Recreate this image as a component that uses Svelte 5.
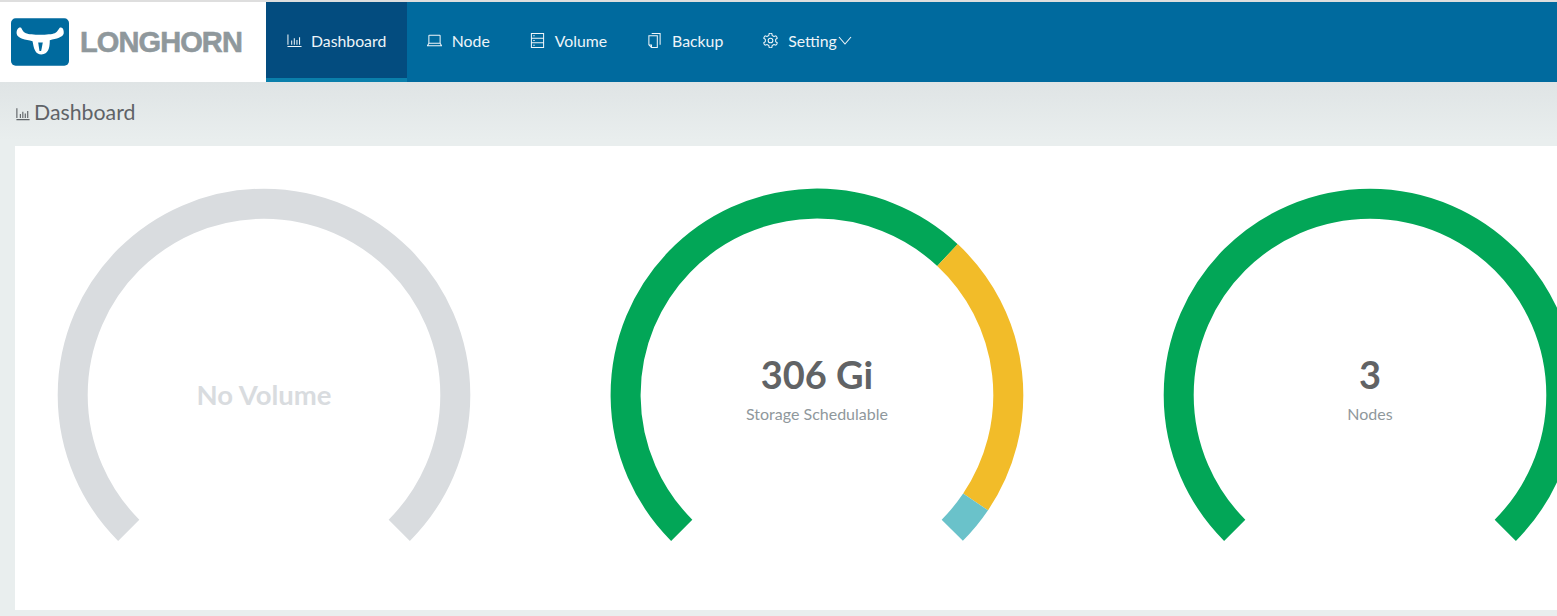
<script>
  const R = 191.3;
  const pt = (deg) => {
    const a = (deg * Math.PI) / 180;
    return [208 + R * Math.sin(a), 208 - R * Math.cos(a)];
  };
  const arc = (from, to) => {
    const [x1, y1] = pt(from);
    const [x2, y2] = pt(to);
    return `M${x1.toFixed(2)} ${y1.toFixed(2)}A${R} ${R} 0 ${to - from > 180 ? 1 : 0} 1 ${x2.toFixed(2)} ${y2.toFixed(2)}`;
  };
  const GREEN = '#02a657';
  const YELLOW = '#f2bc29';
  const TEAL = '#6ac2ca';
  const GREY = '#d9dcdf';

  const gauges = [
    { segs: [{ from: -135, to: 135, c: GREY }], empty: 'No Volume' },
    {
      segs: [
        { from: -135, to: 43, c: GREEN },
        { from: 43, to: 124, c: YELLOW },
        { from: 124, to: 135, c: TEAL }
      ],
      value: '306 Gi',
      label: 'Storage Schedulable'
    },
    { segs: [{ from: -135, to: 135, c: GREEN }], value: '3', label: 'Nodes' }
  ];

  const gear = (() => {
    let d = '';
    for (let i = 0; i < 6; i++) {
      const a = (i * 60 * Math.PI) / 180;
      const p = (r, o) => {
        const t = a + (o * Math.PI) / 180;
        return `${(8 + r * Math.sin(t)).toFixed(2)} ${(8 - r * Math.cos(t)).toFixed(2)}`;
      };
      d += `${i ? 'L' : 'M'}${p(7.6, -11)}Q${p(8, 0)} ${p(7.6, 11)}L${p(5.7, 18)}Q${p(5.3, 30)} ${p(5.7, 42)}`;
    }
    return d + 'Z';
  })();

  const nav = [
    { key: 'bar', label: 'Dashboard', active: true },
    { key: 'laptop', label: 'Node' },
    { key: 'db', label: 'Volume' },
    { key: 'copy', label: 'Backup' },
    { key: 'gear', label: 'Setting', caret: true }
  ];
</script>

{#snippet icon(key)}
  <svg class="ico" viewBox="0 0 16 16" aria-hidden="true">
    {#if key === 'bar'}
      <path d="M.5 14.500h15M1 1.500v11M5 8v4.500M7.800 5.500v7M10.600 7.500v5M13.400 4.500v8" />
    {:else if key === 'laptop'}
      <path d="M2.500 2.500h11a.5.5 0 0 1 .5.5v8H2V3a.5.5 0 0 1 .5-.5zM2 11L.5 13.500h15L14 11" />
    {:else if key === 'db'}
      <path d="M1.500.5h13v15h-13zM1.500 5.500h13M1.500 10.500h13M3.500 3h1.500M3.500 8h1.500M3.500 13h1.500" />
    {:else if key === 'copy'}
      <path d="M5 .5h9v12M2 3h9v12.500H4.800L2 12.700zM2 12.700h2.800v2.800" />
    {:else if key === 'gear'}
      <path d={gear} /><circle cx="8" cy="8" r="2.500" />
    {/if}
  </svg>
{/snippet}

<div class="page">
  <header class="header">
    <div class="brand">
      <svg class="logo" viewBox="33 54 175 143" aria-hidden="true">
        <rect x="33" y="54" width="175" height="143" rx="14" fill="#006a9e" />
        <path fill="#fff" d="M50 100C49 88 56 80 62 82C67 84 66 94 78 99C92 105 150 105 165 99C176 94 176 84 182 82C190 80 193 92 192 100C190 111 170 116 150 120C150 137 148 157 132 162C122 165 111 162 106 152C101 142 100 132 98 123C78 119 51 115 50 100Z" />
        <path fill="#006a9e" d="M115 127L129 127L124 153L119 153Z" />
      </svg>
      <span class="wordmark">LONGHORN</span>
    </div>
    <nav class="nav">
      {#each nav as item}
        <a class="nav-item" class:active={item.active} href="#top">
          {@render icon(item.key)}
          <span class="nav-label">{item.label}</span>
          {#if item.caret}
            <svg class="caret" viewBox="0 0 14 9" aria-hidden="true"><path d="M1 1l6 7 6-7" /></svg>
          {/if}
        </a>
      {/each}
    </nav>
  </header>

  <main class="main">
    <h1 class="title">
      <span class="title-ico">{@render icon('bar')}</span>Dashboard
    </h1>
    <section class="card">
      {#each gauges as g}
        <div class="gauge">
          <svg class="dial" viewBox="0 0 416 416" aria-hidden="true">
            {#each g.segs as s}
              <path d={arc(s.from, s.to)} stroke={s.c} />
            {/each}
          </svg>
          <div class="center">
            {#if g.empty}
              <div class="empty">{g.empty}</div>
            {:else}
              <div class="value">{g.value}</div>
              <div class="label">{g.label}</div>
            {/if}
          </div>
        </div>
      {/each}
    </section>
  </main>
</div>

<style>
  :global(body) {
    margin: 0;
    background: #e9eeee;
  }
  .page {
    width: 1557px;
    height: 616px;
    overflow: hidden;
    font-family: Lato, 'Open Sans', sans-serif;
    background: linear-gradient(#dfe4e5 82px, #e9eeee 140px);
  }
  .header {
    display: flex;
    height: 80px;
    border-top: 2px solid #dedede;
    background: #006a9e;
  }
  .brand {
    width: 255px;
    padding-left: 11px;
    display: flex;
    align-items: center;
    gap: 11px;
    background: #fff;
  }
  .logo {
    width: 58px;
    height: 48px;
    flex: none;
  }
  .wordmark {
    font-family: 'Liberation Sans', Arial, sans-serif;
    font-weight: 700;
    font-size: 29px;
    letter-spacing: -0.9px;
    -webkit-text-stroke: 0.6px #8f989c;
    color: #8f989c;
    line-height: 1;
  }
  .nav {
    display: flex;
  }
  .nav-item {
    display: flex;
    align-items: center;
    gap: 10px;
    padding: 0 20px 4px;
    color: #eef5f9;
    font-size: 15.8px;
    text-decoration: none;
    box-sizing: border-box;
  }
  .nav-item.active {
    background: #034c7f;
    border-bottom: 4px solid #0a7fab;
    padding: 0 20.5px 0 21px;
    gap: 9px;
  }
  .ico {
    width: 15px;
    height: 15px;
    flex: none;
    fill: none;
    stroke: currentColor;
    stroke-width: 1.100;
  }
  .caret {
    width: 14px;
    height: 9px;
    margin-left: -9px;
    fill: none;
    stroke: currentColor;
    stroke-width: 1.100;
  }
  .main {
    padding: 0 0 0 15px;
  }
  .title {
    margin: 0;
    height: 64px;
    padding-bottom: 4px;
    box-sizing: border-box;
    display: flex;
    align-items: center;
    font-size: 21.300px;
    font-weight: 400;
    color: #5f6367;
  }
  .title-ico {
    display: flex;
    margin: 3px 4px 0 1px;
  }
  .title-ico .ico {
    width: 14px;
    height: 14px;
    stroke-width: 1.300;
  }
  .card {
    display: flex;
    gap: 137px;
    width: 1700px;
    height: 423px;
    padding: 41px 0 0 41px;
    background: #fff;
  }
  .gauge {
    position: relative;
    width: 416px;
    height: 416px;
    flex: none;
  }
  .dial {
    display: block;
    width: 416px;
    height: 416px;
    fill: none;
    stroke-width: 30;
  }
  .center {
    position: absolute;
    inset: 0;
    display: flex;
    flex-direction: column;
    align-items: center;
    justify-content: center;
    text-align: center;
  }
  .empty {
    font-size: 27.500px;
    font-weight: 700;
    color: #d9dcdf;
    margin-bottom: 2px;
  }
  .value {
    font-size: 38px;
    font-weight: 700;
    color: #616365;
    line-height: 44px;
  }
  .label {
    font-size: 16px;
    color: #8f989c;
    line-height: 20px;
    margin-top: 8px;
    margin-bottom: 15px;
  }
</style>
